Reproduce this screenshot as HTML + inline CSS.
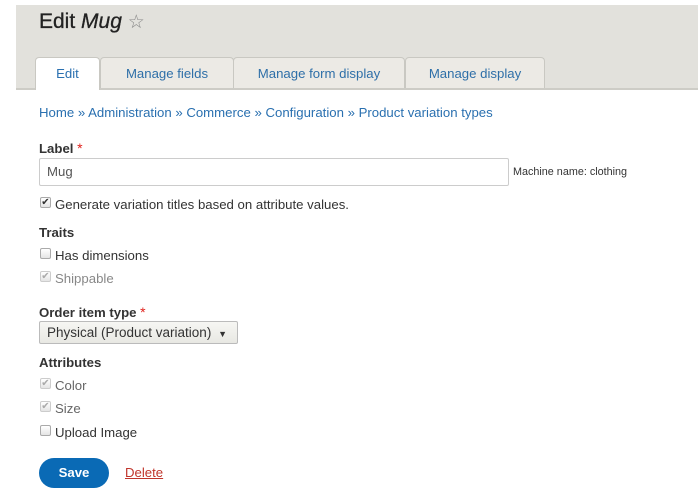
<!DOCTYPE html>
<html><head><meta charset="utf-8"><style>
body{margin:0;width:698px;height:497px;background:#fff;font-family:"Liberation Sans","DejaVu Sans",sans-serif;color:#333;position:relative;overflow:hidden;font-size:13.2px}
.a{position:absolute;white-space:nowrap}
#hd{position:absolute;left:16px;top:5px;width:682px;height:83px;background:#e2e1dc;border-bottom:2px solid #cdccc6}
.tab{position:absolute;top:57px;height:31px;background:#eceae5;border:1px solid #c9c8c2;border-bottom:none;border-radius:4px 4px 0 0;color:#2e6fa8;font-size:13.2px;text-align:center;line-height:31px;box-sizing:border-box}
.lnk{color:#2a70b0}
b{font-weight:bold}
.req{color:#e0201b;font-size:14px}
.cb{position:absolute;width:11px;height:11px;border:1px solid #aaa;border-radius:2px;background:linear-gradient(#fff,#e4e4e4);box-sizing:border-box;font-size:10px;line-height:9px;text-align:center;color:#333}
.dis{color:#888}
</style></head><body>
<div id="hd"></div>
<div class="a" style="left:39px;top:10px;font-size:21px;color:#222;-webkit-text-stroke:0.3px #222">Edit <i>Mug</i> <span style="color:#888;font-size:19px;-webkit-text-stroke:0">☆</span></div>
<div class="tab" style="left:35px;width:65px;background:#fff;height:33px;color:#2a70b0">Edit</div>
<div class="tab" style="left:100px;width:134px">Manage fields</div>
<div class="tab" style="left:233px;width:172px">Manage form display</div>
<div class="tab" style="left:405px;width:140px">Manage display</div>
<div class="a lnk" style="left:39px;top:105px">Home » Administration » Commerce » Configuration » Product variation types</div>
<div class="a" style="left:39px;top:140px"><b>Label</b> <span class="req">*</span></div>
<div class="a" style="left:39px;top:158px;width:470px;height:28px;border:1px solid #ccc;border-radius:2px;box-sizing:border-box;padding-left:7px;line-height:26px;color:#555">Mug</div>
<div class="a" style="left:513px;top:166px;font-size:10.8px;color:#333">Machine name: clothing</div>
<div class="cb" style="left:40px;top:197px">✔</div>
<div class="a" style="left:55px;top:197px">Generate variation titles based on attribute values.</div>
<div class="a" style="left:39px;top:225px"><b>Traits</b></div>
<div class="cb" style="left:40px;top:248px"></div>
<div class="a" style="left:55px;top:248px">Has dimensions</div>
<div class="cb dis" style="left:40px;top:271px;color:#aaa;border-color:#ccc">✔</div>
<div class="a dis" style="left:55px;top:271px">Shippable</div>
<div class="a" style="left:39px;top:304px"><b>Order item type</b> <span class="req">*</span></div>
<div class="a" style="left:39px;top:321px;width:199px;height:23px;border:1px solid #bbb;border-radius:2px;box-sizing:border-box;background:linear-gradient(#f6f6f3,#e8e8e3);padding-left:7px;line-height:21px;font-size:13.5px">Physical (Product variation) <span style="font-size:9px;margin-left:3px">▼</span></div>
<div class="a" style="left:39px;top:355px"><b>Attributes</b></div>
<div class="cb" style="left:40px;top:378px;color:#aaa;border-color:#ccc">✔</div>
<div class="a dis" style="left:55px;top:378px;color:#666">Color</div>
<div class="cb" style="left:40px;top:401px;color:#aaa;border-color:#ccc">✔</div>
<div class="a" style="left:55px;top:401px;color:#666">Size</div>
<div class="cb" style="left:40px;top:425px"></div>
<div class="a" style="left:55px;top:425px">Upload Image</div>
<div class="a" style="left:39px;top:458px;width:70px;height:30px;border-radius:15px;background:#0a6ab5;color:#fff;font-weight:bold;text-align:center;line-height:30px">Save</div>
<div class="a" style="left:125px;top:465px;color:#c0352b;text-decoration:underline">Delete</div>
</body></html>
